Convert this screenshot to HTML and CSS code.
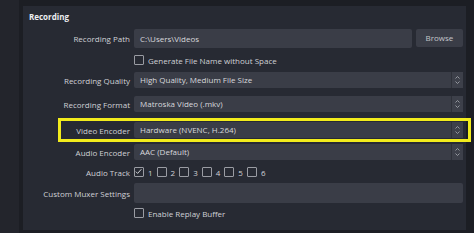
FILE: index.html
```html
<!DOCTYPE html>
<html lang="en">
<head>
    <meta charset="UTF-8" />
    <meta name="viewport" content="width=device-width, initial-scale=1.0" />
    <title>Recording Settings</title>
    <link rel="stylesheet" href="styles.css">
</head>
<body>
    <div class="window">
        <div class="sidebar"></div>
        <div class="panel">
            <div class="panel-title">Recording</div>

            <div class="row row-path">
                <label class="label">Recording Path</label>
                <div class="field">
                    <div class="input">C:\Users\Videos</div>
                    <div class="button">Browse</div>
                </div>
            </div>

            <div class="row row-check">
                <span class="label"></span>
                <div class="field">
                    <span class="checkbox"></span>
                    <span class="check-text">Generate File Name without Space</span>
                </div>
            </div>

            <div class="row">
                <label class="label">Recording Quality</label>
                <div class="field">
                    <div class="combo">
                        <span class="combo-text">High Quality, Medium File Size</span>
                        <span class="spinner"><svg viewBox="0 0 11 16" width="11" height="16"><path d="M3.5 6.5 L5.5 4.5 L7.5 6.5 M3.5 9.5 L5.5 11.5 L7.5 9.5" /></svg></span>
                    </div>
                </div>
            </div>

            <div class="row row-format">
                <label class="label">Recording Format</label>
                <div class="field">
                    <div class="combo">
                        <span class="combo-text">Matroska Video (.mkv)</span>
                        <span class="spinner"><svg viewBox="0 0 11 16" width="11" height="16"><path d="M3.5 6.5 L5.5 4.5 L7.5 6.5 M3.5 9.5 L5.5 11.5 L7.5 9.5" /></svg></span>
                    </div>
                </div>
            </div>

            <div class="row row-encoder highlight">
                <label class="label">Video Encoder</label>
                <div class="field">
                    <div class="combo">
                        <span class="combo-text">Hardware (NVENC, H.264)</span>
                        <span class="spinner"><svg viewBox="0 0 11 16" width="11" height="16"><path d="M3.5 6.5 L5.5 4.5 L7.5 6.5 M3.5 9.5 L5.5 11.5 L7.5 9.5" /></svg></span>
                    </div>
                </div>
            </div>

            <div class="row">
                <label class="label">Audio Encoder</label>
                <div class="field">
                    <div class="combo">
                        <span class="combo-text">AAC (Default)</span>
                        <span class="spinner"><svg viewBox="0 0 11 16" width="11" height="16"><path d="M3.5 6.5 L5.5 4.5 L7.5 6.5 M3.5 9.5 L5.5 11.5 L7.5 9.5" /></svg></span>
                    </div>
                </div>
            </div>

            <div class="row">
                <label class="label">Audio Track</label>
                <div class="field tracks">
                    <span class="track"><span class="checkbox checked"><svg viewBox="0 0 9 9" width="9" height="9"><path d="M1.8 4.6 L3.6 6.4 L7.4 2.2" /></svg></span>1</span>
                    <span class="track"><span class="checkbox"></span>2</span>
                    <span class="track"><span class="checkbox"></span>3</span>
                    <span class="track"><span class="checkbox"></span>4</span>
                    <span class="track"><span class="checkbox"></span>5</span>
                    <span class="track"><span class="checkbox"></span>6</span>
                </div>
            </div>

            <div class="row row-muxer">
                <label class="label">Custom Muxer Settings</label>
                <div class="field">
                    <div class="input input-wide"></div>
                </div>
            </div>

            <div class="row row-replay">
                <span class="label"></span>
                <div class="field">
                    <span class="checkbox"></span>
                    <span class="check-text">Enable Replay Buffer</span>
                </div>
            </div>
        </div>
    </div>
</body>
</html>
```

FILE: styles.css
```css
body {
    margin: 0;
    background: #1c1e24;
    font-family: "Open Sans", "Liberation Sans", sans-serif;
    font-size: 8px;
    color: #cfd1d6;
    overflow: hidden;
}

.window {
    display: flex;
    height: 233px;
}

.sidebar {
    width: 19px;
    background: #23252c;
    margin-right: 4px;
}

.panel {
    width: 443px;
    margin-top: 6px;
    height: 224px;
    background: #272a33;
}

.panel-title {
    height: 20px;
    padding-left: 6px;
    line-height: 22px;
    font-weight: 700;
    color: #ecedf0;
}

/* Each form row: label column, then the field */
.row {
    display: flex;
    align-items: center;
    height: 20px;
}

.row-path { height: 24px; }
.row-format { height: 28px; }
.row-encoder { height: 24px; }
.row-muxer { height: 22px; }
.row-replay { height: 18px; }

.label {
    width: 107px;
    flex: none;
    text-align: right;
    white-space: nowrap;
}

.field {
    display: flex;
    align-items: center;
    margin-left: 4px;
    width: 329px;
}

.input {
    height: 19px;
    flex: 1;
    background: #3a3d47;
    border-radius: 2px;
    line-height: 19px;
    padding-left: 6px;
    color: #d8d9dd;
}

.input-wide {
    height: 20px;
}

.button {
    width: 47px;
    height: 18px;
    margin-left: 4px;
    background: #3a3d47;
    border-radius: 2px;
    text-align: center;
    line-height: 18px;
    color: #c4c6cc;
}

.combo {
    display: flex;
    height: 16px;
    flex: 1;
    background: #3a3d47;
    border-radius: 2px;
    color: #d8d9dd;
}

.combo-text {
    flex: 1;
    line-height: 16px;
    padding-left: 6px;
}

.spinner {
    width: 11px;
    border-left: 1px solid #2e3139;
    background: #3d404a;
}

.spinner svg {
    display: block;
}

.spinner path {
    fill: none;
    stroke: #9ea1a8;
    stroke-width: 0.9;
}

.checkbox {
    width: 8px;
    height: 8px;
    border: 1px solid #9a9ca3;
    border-radius: 1px;
    flex: none;
}

.checkbox svg {
    display: block;
    margin: -1px;
}

.checkbox path {
    fill: none;
    stroke: #d0d2d6;
    stroke-width: 1;
}

.check-text {
    margin-left: 4px;
}

.tracks {
    gap: 4px;
}

.track {
    display: flex;
    align-items: center;
    gap: 4px;
}

/* Yellow annotation frame drawn over the encoder row */
.highlight {
    position: relative;
}

.highlight::before {
    content: "";
    position: absolute;
    left: 35px;
    top: 0;
    width: 407px;
    height: 18px;
    border: 3px solid #f2ec1c;
}
```
